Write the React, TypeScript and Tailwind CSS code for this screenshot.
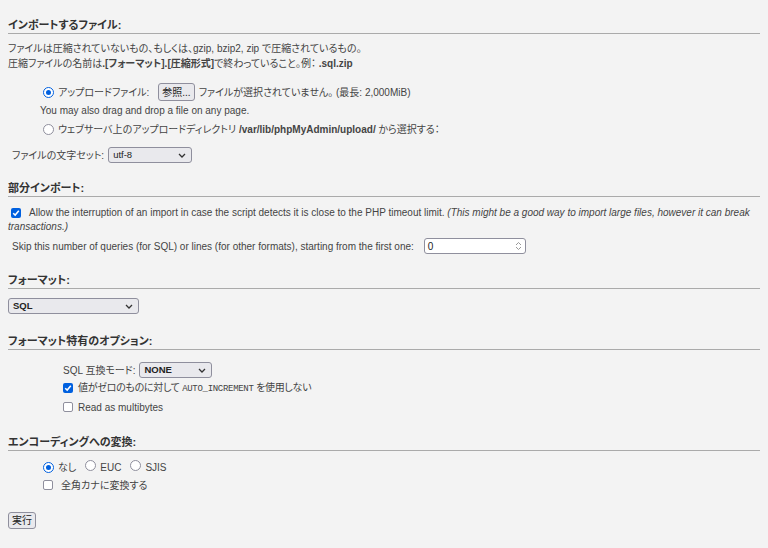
import React from "react";

const Radio = ({ checked }: { checked?: boolean }) =>
  checked ? (
    <span className="inline-flex shrink-0 w-[11px] h-[11px] rounded-full border-[1.5px] border-[#0060df] bg-white items-center justify-center">
      <span className="w-[5px] h-[5px] rounded-full bg-[#0060df]" />
    </span>
  ) : (
    <span className="inline-block shrink-0 w-[11px] h-[11px] rounded-full border border-[#8f8f9d] bg-white" />
  );

const Check = ({ checked }: { checked?: boolean }) =>
  checked ? (
    <span className="inline-flex shrink-0 w-[10px] h-[10px] rounded-[2px] bg-[#0060df] items-center justify-center align-middle">
      <svg width="8" height="8" viewBox="0 0 8 8">
        <path d="M1.2 4.2 L3.2 6.1 L6.8 1.8" fill="none" stroke="white" strokeWidth="1.5" />
      </svg>
    </span>
  ) : (
    <span className="inline-block shrink-0 w-[10px] h-[10px] rounded-[2px] border border-[#8f8f9d] bg-white align-middle" />
  );

const Chevron = () => (
  <svg width="8" height="5" viewBox="0 0 8 5">
    <path d="M1 1 L4 4 L7 1" fill="none" stroke="#333" strokeWidth="1.3" />
  </svg>
);

const Select = ({ value, w, bold }: { value: string; w: string; bold?: boolean }) => (
  <div
    className={`${w} h-[16px] flex items-center justify-between pl-[4px] pr-[5px] bg-[#e9e9ed] border border-[#8f8f9d] rounded-[3px] text-[9.5px] text-[#222] ${bold ? "font-bold" : ""}`}
  >
    <span>{value}</span>
    <Chevron />
  </div>
);

const Heading = ({ children, mt }: { children: React.ReactNode; mt: string }) => (
  <div className={`${mt} leading-[14px] pb-[1px] border-b border-[#aaaaaa] text-[11px] font-bold text-[#333]`}>
    {children}
  </div>
);

export default function App() {
  return (
    <div className="w-[768px] h-[548px] bg-[#f3f3f3] overflow-hidden font-['Liberation_Sans','Noto_Sans_CJK_JP',sans-serif] [font-feature-settings:'palt'] text-[10px] text-[#444] px-[8px]">
      <Heading mt="mt-[18px]">インポートするファイル:</Heading>

      <div className="mt-[7px] leading-[15px]">
        <div>ファイルは圧縮されていないもの、もしくは、gzip, bzip2, zip で圧縮されているもの。</div>
        <div>
          圧縮ファイルの名前は<b>.[フォーマット].[圧縮形式]</b>で終わっていること。例： <b>.sql.zip</b>
        </div>
      </div>

      <div className="mt-[12px] h-[18px] pl-[35px] flex items-center">
        <Radio checked />
        <span className="ml-[4px]">アップロードファイル:</span>
        <span className="ml-[9px] h-[18px] px-[3px] flex items-center bg-[#e9e9ed] border border-[#8f8f9d] rounded-[3px] text-[#222]">
          参照...
        </span>
        <span className="ml-[4px]">ファイルが選択されていません。 (最長: 2,000MiB)</span>
      </div>

      <div className="mt-[3px] leading-[14px] pl-[32px]">You may also drag and drop a file on any page.</div>

      <div className="mt-[4px] h-[14px] pl-[35px] flex items-center">
        <Radio />
        <span className="ml-[4px]">
          ウェブサーバ上のアップロードディレクトリ <b>/var/lib/phpMyAdmin/upload/</b> から選択する：
        </span>
      </div>

      <div className="mt-[11px] pl-[4px] flex items-center">
        <span>ファイルの文字セット:</span>
        <div className="ml-[4px]">
          <Select value="utf-8" w="w-[84px]" />
        </div>
      </div>

      <Heading mt="mt-[18px]">部分インポート:</Heading>

      <div className="mt-[9px] leading-[14px]">
        <div className="flex items-center">
          <span className="ml-[3px] mr-[8px] flex">
            <Check checked />
          </span>
          <span>
            Allow the interruption of an import in case the script detects it is close to the PHP timeout limit.{" "}
            <i>(This might be a good way to import large files, however it can break</i>
          </span>
        </div>
        <div>
          <i>transactions.)</i>
        </div>
      </div>

      <div className="mt-[4px] pl-[4px] flex items-center">
        <span>Skip this number of queries (for SQL) or lines (for other formats), starting from the first one:</span>
        <div className="ml-[10px] w-[102px] h-[16px] flex items-center justify-between pl-[3px] pr-[3px] bg-white border border-[#8f8f9d] rounded-[3px] text-[#222]">
          <span>0</span>
          <svg width="7" height="10" viewBox="0 0 7 10">
            <path d="M1 4 L3.5 1.5 L6 4 M1 6 L3.5 8.5 L6 6" fill="none" stroke="#999" strokeWidth="1" />
          </svg>
        </div>
      </div>

      <Heading mt="mt-[19px]">フォーマット:</Heading>

      <div className="mt-[9px]">
        <Select value="SQL" w="w-[131px]" bold />
      </div>

      <Heading mt="mt-[20px]">フォーマット特有のオプション:</Heading>

      <div className="mt-[12px] pl-[55px] flex items-center">
        <span>SQL 互換モード:</span>
        <div className="ml-[4px]">
          <Select value="NONE" w="w-[73px]" bold />
        </div>
      </div>

      <div className="mt-[3px] h-[14px] pl-[55px] flex items-center">
        <Check checked />
        <span className="ml-[5px] tracking-[-0.3px]">
          値がゼロのものに対して <span className="font-['Liberation_Mono',monospace] text-[9px] tracking-[-0.3px]">AUTO_INCREMENT</span> を使用しない
        </span>
      </div>

      <div className="mt-[5px] h-[14px] pl-[55px] flex items-center">
        <Check />
        <span className="ml-[5px]">Read as multibytes</span>
      </div>

      <Heading mt="mt-[21px]">エンコーディングへの変換:</Heading>

      <div className="mt-[9px] h-[14px] pl-[35px] flex items-center">
        <Radio checked />
        <span className="ml-[4px]">なし</span>
        <span className="ml-[9px]">
          <Radio />
        </span>
        <span className="ml-[4px]">EUC</span>
        <span className="ml-[9px]">
          <Radio />
        </span>
        <span className="ml-[4px]">SJIS</span>
      </div>

      <div className="mt-[4px] h-[14px] pl-[35px] flex items-center">
        <Check />
        <span className="ml-[8px]">全角カナに変換する</span>
      </div>

      <div className="mt-[20px]">
        <span className="inline-flex h-[17px] px-[3px] items-center bg-[#e9e9ed] border border-[#8f8f9d] rounded-[3px] text-[#222]">
          実行
        </span>
      </div>
    </div>
  );
}
